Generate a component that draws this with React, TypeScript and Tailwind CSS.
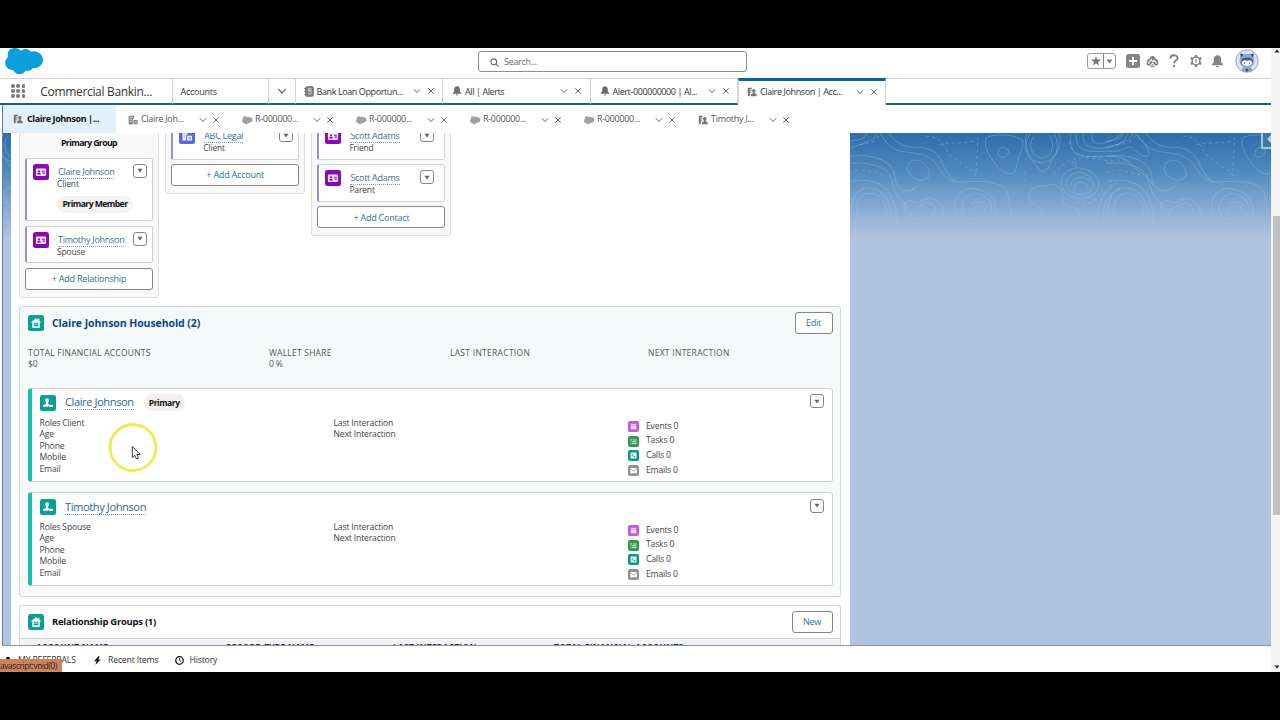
import type { ReactNode } from "react";
import clsx from "clsx";

type IconProps = { className?: string };

function Chevron({ className }: IconProps) {
  return (
    <svg viewBox="0 0 8 8" className={clsx("h-2 w-2 shrink-0", className)} fill="none" stroke="#666" strokeWidth="1">
      <path d="M1 2.300 4 5.600 7 2.300" />
    </svg>
  );
}

function Close({ className }: IconProps) {
  return (
    <svg viewBox="0 0 8 8" className={clsx("h-2 w-2 shrink-0", className)} fill="none" stroke="#666" strokeWidth="1">
      <path d="M1.300 1.300 6.700 6.700M6.700 1.300 1.300 6.700" />
    </svg>
  );
}

function Bell({ className }: IconProps) {
  return (
    <svg viewBox="0 0 12 12" className={className} fill="#706e6b">
      <path d="M6 .3C3.800.3 2.600 2 2.600 4v2.600L.8 8.500v.9h10.400v-.9L9.400 6.600V4C9.400 2 8.200.3 6 .3ZM4.300 10.200a1.750 1.500 0 0 0 3.400 0Z" />
    </svg>
  );
}

function LoanIcon() {
  return (
    <svg viewBox="0 0 10 11" className="ml-[-1px] h-[11px] w-2.5" fill="none" stroke="#666" strokeWidth="1">
      <rect x="1.800" y=".8" width="7.400" height="9.400" rx=".8" fill="#888" />
      <path d="M3.700 3h3.800M3.700 5h3.800M4.500 7.500l1 1 2-2" stroke="#eee" strokeWidth=".9" />
      <path d="M.4 2.500h2M.4 5.500h2M.4 8.500h2" />
    </svg>
  );
}

function PersonAccount() {
  return (
    <svg viewBox="0 0 10 10" className="h-2.5 w-2.5" fill="#777">
      <path d="M.8.8h4v1.400h-2v1h1.800v1H2.800v1h1.400v1H2.800V9h-2Z" />
      <circle cx="6.800" cy="3.700" r="1.800" />
      <path d="M5.900 5h1.800v1.300l2 1v1.900H3.900V7.300l2-1Z" />
    </svg>
  );
}

function Building() {
  return (
    <svg viewBox="0 0 10 10" className="h-2.5 w-2.5" fill="#888">
      <path d="M.6.8h5.400v3H4.800v5.400H.6Z" />
      <path d="M5.400 5h4.200v4.200H5.400Z" />
      <path d="M1.600 2.400h3M1.600 4.400h2.400M1.600 6.400h2.400M6.300 7h2.400" stroke="#eee" strokeWidth=".7" />
    </svg>
  );
}

const CLOUD =
  "M16 4.200C17.300 2.700 19.200 2 21.100 2.200c2.100.2 3.900 1.300 5 3 1.300-.6 2.800-.7 4.300-.4 4.600.9 7.900 4.900 7.600 9.700-.4 5-4.900 8.900-10.200 8.100-1.300 2.400-4.300 3.700-7.200 2.600-1.300 3-4.500 4.700-7.700 3.700-2.200-.6-3.900-2.200-4.600-4.300C4 25.200 0 21.500.2 16.700c.1-2.500 1.300-4.600 3-5.900C1.500 6.500 4.100 1.900 8.700 1.200c3-.4 5.700.8 7.300 3Z";

function Cloud() {
  return (
    <svg viewBox="0 0 40 30" className="h-2.5 w-[11px]" fill="#a0a0a0" preserveAspectRatio="none">
      <path d={CLOUD} transform="translate(0 3) scale(1 .85)" />
    </svg>
  );
}

function MenuButton({ className }: IconProps) {
  return (
    <span className={clsx("flex h-3.5 w-3.5 shrink-0 items-center justify-center rounded-[3px] border border-[#858585] bg-white", className)}>
      <svg viewBox="0 0 8 6" className="h-[5px] w-1.5" fill="#666">
        <path d="M.5.5h7L4 5.500Z" />
      </svg>
    </span>
  );
}

/* Square object icons */
function ContactIcon() {
  return (
    <svg viewBox="0 0 16 16" className="h-4 w-4 shrink-0">
      <rect width="16" height="16" rx="2.500" fill="#8a08b4" />
      <rect x="2.900" y="4.600" width="10.200" height="7.300" rx="1" fill="#f6e6fb" />
      <circle cx="6" cy="7.300" r="1.100" fill="#8a08b4" />
      <path d="M4 10.500c0-2.300 4-2.300 4 0ZM8.800 6.700h3v1h-3ZM9.600 8.400h2.200v1.300H9.600Z" fill="#8a08b4" />
    </svg>
  );
}

function AccountIcon() {
  return (
    <svg viewBox="0 0 16 16" className="h-4 w-4 shrink-0">
      <rect width="16" height="16" rx="2.500" fill="#5867e8" />
      <path d="M3.500 3.500h5v3.300H7v5.700H3.500ZM8 7.700h5v4.800H8Z" fill="#fff" />
      <path d="M4.500 5h3M4.500 7h1.500M4.500 9h1.500M9 9.300h3M9 11h3" stroke="#5867e8" strokeWidth=".7" />
    </svg>
  );
}

function HouseIcon() {
  return (
    <svg viewBox="0 0 16 16" className="h-4 w-4 shrink-0">
      <rect width="16" height="16" rx="2.500" fill="#0b9f90" />
      <path d="M8 3 2.800 7.600h1.400v4.600c0 .5.3.8.8.8h6c.5 0 .8-.3.8-.8V7.600h1.400l-1.800-1.700V3.700H9.900v1Z" fill="#eafaf7" />
      <circle cx="6.900" cy="8.300" r=".9" fill="#0b9f90" />
      <circle cx="9.300" cy="8.300" r=".9" fill="#0b9f90" />
      <path d="M5.400 9.600h5.400L9.900 11.200H6.300Z" fill="#0b9f90" />
    </svg>
  );
}

function MemberIcon() {
  return (
    <svg viewBox="0 0 16 16" className="h-4 w-4 shrink-0">
      <rect width="16" height="16" rx="2.500" fill="#0b9f90" />
      <ellipse cx="7" cy="5.500" rx="1.900" ry="2.300" fill="#fff" />
      <path d="M6.100 6.500h1.800v1.800l1 .6-.6 2.900H3.200V10.300L6.100 8.700Z" fill="#fff" />
      <rect x="8.900" y="9.700" width="4.300" height="2.300" rx="1.100" fill="#fff" />
    </svg>
  );
}

const activities: { label: string; color: string; glyph: ReactNode }[] = [
  {
    label: "Events 0",
    color: "#c05bdf",
    glyph: <path d="M2.800 3.200h5.400v1H2.800ZM2.800 4.700h5.400v3.500H2.800ZM3.700 2.400h.8v1h-.8ZM6.500 2.400h.8v1h-.8Z" fill="#f7e4fb" />,
  },
  {
    label: "Tasks 0",
    color: "#359a51",
    glyph: <path d="M2.300 3.700l.7.7 1-1.300M5 4h3.500M4 5.700h4.500M2.500 5.700h.8M4 7.500h4.500M2.500 7.500h.8" stroke="#fff" strokeWidth=".8" fill="none" />,
  },
  {
    label: "Calls 0",
    color: "#0b9a8b",
    glyph: (
      <>
        <rect x="2.700" y="2.500" width="5.800" height="6" rx=".7" fill="#eefafa" />
        <path d="M4.300 4c-.2 2 1.300 3.300 3 3l-.1-.9-.9-.1-.4.3-.9-1 .4-.4-.3-.9Z" fill="#0b9a8b" />
      </>
    ),
  },
  {
    label: "Emails 0",
    color: "#939393",
    glyph: (
      <>
        <rect x="2.300" y="3" width="6.600" height="5.200" rx=".6" fill="#fff" />
        <path d="M2.400 3.500 5.600 6.200 8.800 3.500" stroke="#939393" strokeWidth=".8" fill="none" />
      </>
    ),
  },
];

function TopBar() {
  return (
    <header className="flex h-[31px] items-center border-b border-[#d4d4d4] bg-white">
      <svg viewBox="0 0 40 30" className="mt-[-5px] ml-[5px] h-[28px] w-[40px]" preserveAspectRatio="none" fill="#0b9edb">
        <path d={CLOUD} />
      </svg>
      <div className="mt-[-4px] ml-[433px] flex h-[21px] w-[269px] items-center rounded-[3px] border border-[#8c8c8c] pl-[11px]">
        <svg viewBox="0 0 10 10" className="mt-0.5 h-[9px] w-[9px]" fill="none" stroke="#666" strokeWidth="1.200">
          <circle cx="4.200" cy="4.200" r="3.200" />
          <path d="M6.500 6.500 9.500 9.500" />
        </svg>
        <span className="mt-px ml-[5px] text-[9px] tracking-[-0.3px] text-[#706e6b]">Search...</span>
      </div>
      <div className="mt-[-4px] ml-[340px] flex items-center">
        <div className="flex h-4 w-[29px] rounded-[3px] border border-[#999]">
          <span className="flex w-4 items-center justify-center border-r border-[#888]">
            <svg viewBox="0 0 10 10" className="h-2.5 w-2.5" fill="#777">
              <path d="m5 0 1.200 3.600H10L7 5.900 8.100 9.600 5 7.400 1.900 9.600 3 5.900 0 3.600h3.800Z" />
            </svg>
          </span>
          <span className="flex flex-1 items-center justify-center">
            <svg viewBox="0 0 8 6" className="h-[5px] w-[7px]" fill="#777">
              <path d="M.5.5h7L4 5.500Z" />
            </svg>
          </span>
        </div>
        <svg viewBox="0 0 14 14" className="ml-2.5 h-3.5 w-3.5">
          <rect width="14" height="14" rx="2.500" fill="#858585" />
          <path d="M7 3v8M3 7h8" stroke="#fff" strokeWidth="1.800" />
        </svg>
        {/* Guidance center */}
        <svg viewBox="0 0 14 14" className="ml-[6px] h-[13px] w-[13px]" fill="#808080">
          <path d="M4 3.600C4.800 1.500 5.900 1 7 1s2.200.5 3 2.600c2 .9 3.400 3.100 3.400 5.300 0 1.300-.6 2-1.600 2.400H2.200C1.200 10.900.6 10.200.6 8.900.6 6.700 2 4.500 4 3.600ZM3.800 12h6.400L8.600 13.200H5.400Z" />
          <path d="M2.300 9.300 5.600 5l1.600 2 1.300-1.300 3.200 3.600M4.700 11.600 7 8.600l2.300 3" stroke="#fff" strokeWidth="1.100" fill="none" />
        </svg>
        <svg viewBox="0 0 14 14" className="ml-2 h-3.5 w-3.5" fill="none" stroke="#808080" strokeWidth="1.900">
          <path d="M3.400 4.500c0-4.300 7.200-4.200 7.200-.3C10.600 6.500 7 6.700 7 9.300" />
          <path d="M7 11v2.200" />
        </svg>
        <svg viewBox="0 0 14 14" className="ml-2 h-3.5 w-3.5" fill="none" stroke="#808080">
          <circle cx="7" cy="7" r="3.900" strokeWidth="1.500" />
          <path d="M7 1v2M7 11v2M1.800 4l1.700 1M10.500 9l1.700 1M1.800 10l1.700-1M10.500 5l1.700-1" strokeWidth="2.200" />
          <path d="m7.400 5-1.200 2h1.400L6.800 9" strokeWidth=".9" />
        </svg>
        <Bell className="ml-2 h-[13px] w-[13px] opacity-85" />
        <svg viewBox="0 0 24 24" className="ml-[10.500px] h-6 w-6">
          <circle cx="12" cy="12" r="11.200" fill="#dce4f3" stroke="#8d9abf" strokeWidth=".9" />
          <path d="M5 9c0-3 3-4 7-4s7 1 7 4c1.500 5-1 9.500-7 9.500S3.500 14 5 9Z" fill="#93a4cd" />
          <path d="M5.200 4.600 8.600 5.200 6 8.400ZM18.800 4.600l-3.400.6L18 8.400Z" fill="#34436f" />
          <path d="M6.300 13.500c-.3-3 1.300-5 3.200-4.500 1.700-.8 3.300-.8 5 0 1.900-.5 3.500 1.500 3.200 4.500-.3 2.500-2.400 3.700-5.700 3.700s-5.400-1.200-5.700-3.700Z" fill="#43558a" />
          <path d="M7 14c0-2.800 2.300-3.600 5-2.200 2.700-1.400 5-.6 5 2.200 0 2-2 3-5 3s-5-1-5-3Z" fill="#fff" />
          <circle cx="9.500" cy="14" r=".7" fill="#34436f" />
          <circle cx="14.500" cy="14" r=".7" fill="#34436f" />
          <path d="M8 18.300h8l1.500 3c-3 2-8 2-11 0Z" fill="#8fa1cb" />
          <circle cx="12" cy="21" r="1.500" fill="#3e4e7b" />
        </svg>
      </div>
    </header>
  );
}

function WorkspaceTab({ icon, label, width, active }: { icon: ReactNode; label: string; width: string; active?: boolean }) {
  return (
    <div
      className={clsx(
        "flex items-center",
        width,
        active
          ? "mt-[-1px] border-r border-l border-t-[3px] border-[#d4d4d4] border-t-[#0e5f93] bg-white pb-[3px] pl-2"
          : "border-r border-b-2 border-[#d4d4d4] border-b-[#17637c] pl-[9px]",
      )}
    >
      {icon}
      <span className="ml-[3px] w-0 flex-1 pt-px whitespace-nowrap text-[9px] tracking-[-0.4px] text-[#333]">{label}</span>
      <Chevron />
      <Close className="mr-[7.500px] ml-1.5" />
    </div>
  );
}

function NavBar() {
  return (
    <nav className="flex h-[26px] bg-white">
      <div className="flex w-[172.500px] items-center border-r border-b-2 border-[#d4d4d4] border-b-[#17637c] pl-[11px]">
        <div className="grid grid-cols-3 gap-[1.600px]">
          {Array.from({ length: 9 }, (_, i) => (
            <span key={i} className="h-[3.700px] w-[3.700px] rounded-full bg-[#777]" />
          ))}
        </div>
        <span className="ml-[15px] pt-px whitespace-nowrap text-[12px] tracking-[-0.320px] text-[#333]">Commercial Bankin...</span>
      </div>
      <div className="flex w-24 items-center border-r border-b-2 border-[#d4d4d4] border-b-[#17637c] pt-px pl-2 text-[9px] tracking-[-0.250px] text-[#333]">Accounts</div>
      <div className="flex w-[27px] items-center justify-center border-r border-b-2 border-[#d4d4d4] border-b-[#17637c]">
        <Chevron className="scale-125" />
      </div>
      <WorkspaceTab icon={<LoanIcon />} label="Bank Loan Opportun..." width="w-[147.500px]" />
      <WorkspaceTab icon={<Bell className="h-2.5 w-2.5" />} label="All | Alerts" width="w-[147.500px]" />
      <WorkspaceTab icon={<Bell className="h-2.5 w-2.5" />} label="Alert-000000000 | Al..." width="w-[147.500px]" />
      <WorkspaceTab icon={<PersonAccount />} label="Claire Johnson | Acc..." width="w-[148px]" active />
      <div className="flex-1 border-b-2 border-[#17637c]" />
    </nav>
  );
}

const subtabs = [
  { label: "Claire Joh...", icon: <Building /> },
  { label: "R-000000...", icon: <Cloud /> },
  { label: "R-000000...", icon: <Cloud /> },
  { label: "R-000000...", icon: <Cloud /> },
  { label: "R-000000...", icon: <Cloud /> },
  { label: "Timothy J...", icon: <PersonAccount /> },
];

function SubTabs() {
  return (
    <div className="flex h-7 items-center bg-white pl-0.5">
      <div className="flex h-full w-[114px] items-center border-l border-[#5f7f96] bg-[#e3f0f9] pl-2.5">
        <PersonAccount />
        <span className="ml-[4px] whitespace-nowrap text-[9px] font-bold tracking-[-0.4px] text-[#111]">Claire Johnson |...</span>
      </div>
      {subtabs.map(({ label, icon }, i) => (
        <div key={i} className="flex w-[114px] items-center pl-3">
          <span className="flex w-[13px] pt-px">{icon}</span>
          <span className="flex-1 whitespace-nowrap text-[9px] tracking-[-0.3px] text-[#555]">{label}</span>
          <Chevron className="mt-px mr-[-0.500px]" />
          <Close className="mt-px mr-[10px] ml-1.5" />
        </div>
      ))}
    </div>
  );
}

/* One repeat of the contour-line artwork behind the record page */
function Contours() {
  return (
    <g fill="none" strokeWidth="2.500">
      <path d="M450 315c10-14 32-4 27 10-5 18-36 16-30-3ZM412 278c-12 25 5 50 28 82 20 26 52 38 60 14 4-32 25-66 20-86-20-20-80-22-108-10Z" />
      <path d="M555 275c-18 18-12 60 20 64 38 5 44-48 24-68M542 268c-22 30-10 82 35 86 48-2 58-54 38-86M532 268c-16 60 20 76 36 106 10 12 28 5 32-10 8-28 44-50 30-96" />
      <path d="M730 268c-8 26 14 34 42 24 20-4 36-16 48-26M702 268c-4 40 34 48 72 40 34-8 50-10 62-40M682 268c-8 66 60 50 108 52 32 2 42-22 60-10 22 20 38 32 48 20 8-18-22-46-40-62M664 268c-8 84 52 66 106 66 48 0 68 10 88 36 20 20 40 22 54 52" />
      <path d="M178 358c12-18 40-12 50 2 18 20 16 40-4 46-26 6-62-26-46-48Z" />
      <path d="M94 268c36 64 76 50 116 60 58 12 56 52 84 70 20 20 40 12 92 12 72 0 92 24 94 60 2 42 22 54 4 84M120 268c40 50 70 36 108 42 60 16 40 60 90 100" />
      <path d="M0 335c50-6 90 0 120 26 24 24 12 36 22 56 14 28 40 28 64 6M0 355c60-4 110 10 124 42 10 34 8 50 44 80M0 310c60-20 72-22 80-42M0 290c30-4 44-8 52-22" />
      <path d="M0 412c50-14 100-2 124 40 14 34 24 56 12 92M8 520c-6-44 4-92 54-90 40 0 62 40 68 108M24 510c-8-40 14-68 44-64 38 4 48 50 42 64-14 10-24 8-24 32M40 555c-10-22 2-32 14-32" />
      <path d="M166 495c-8-24 10-32 26-24 22 14 36-22 66-6 24 12 42 60 8 66-22 10-36-4-54 8-22 8-38-18-46-44ZM190 496c14-6 24-14 36-20 20-4 40 8 32 28-14 20-38 8-52 20-10 8-28-14-16-28Z" />
      <path d="M338 490c2-30 30-54 60-40 36 18 38 56 10 72-36 14-70-4-70-32ZM320 510c-16-50 18-88 66-76 62 14 70 80 30 104-40 16-84 6-96-28ZM356 495c10-28 44-30 62-8M362 500c12-20 34-22 50-4M362 515c4-8 14-4 10 6-4 8-14 4-10-6ZM403 498c6-8 16-2 10 8-6 6-14 0-10-8ZM334 500l10-4 2 16" />
      <path d="M638 424c-10-26 20-58 54-54 50 8 70 44 48 74-28 30-92 20-102-20ZM650 420c0-28 28-42 50-36 34 10 40 40 22 58-26 16-62 6-72-22ZM666 424c0-30 42-36 60-10M674 430c6-24 32-24 44-4M666 355c8-8 20 0 14 14" />
      <path d="M540 470c-8-36 22-50 52-46 26-16 52 12 50 38-10 26 28 18 40 32 18 20 6 40-4 56M540 470c30 10 48 32 50 80M742 545c-2-44 14-110 60-130M758 555c0-60 10-100 54-126M470 550l14-40M620 555l10-40h60M142 550v-40M170 545h150" />
      <path strokeDasharray="10 9" d="M0 385c40-20 80 0 112 10M230 274c60 0 50 50 90 70 30 30 52 26 60 48l6-114M528 380v34M612 390c34-40 60-60 140-46 30 10 60-10 92 16M680 470c30 14 60 10 80-40M660 290c6 30 20 50 100 46M270 300c30-10 60 0 110-12M30 300c30 0 50-10 60-30" />
    </g>
  );
}

function Backdrop() {
  return (
    <svg aria-hidden className="absolute inset-x-0 top-0 h-[106px] w-full" viewBox="0 0 1269 106">
      <defs>
        <linearGradient id="sky" x2="0" y2="1">
          <stop offset="0" stopColor="#2f6ca9" />
          <stop offset=".35" stopColor="#4f88bd" />
          <stop offset=".7" stopColor="#86abd2" />
          <stop offset="1" stopColor="#b0c4df" />
        </linearGradient>
        <linearGradient id="ink" gradientUnits="userSpaceOnUse" x1="0" y1="265" x2="0" y2="565">
          <stop offset="0" stopColor="#a6cbec" stopOpacity=".42" />
          <stop offset=".7" stopColor="#b6d2ee" stopOpacity=".32" />
          <stop offset="1" stopColor="#c6d9ee" stopOpacity="0" />
        </linearGradient>
      </defs>
      <rect width="1269" height="106" fill="url(#sky)" />
      {[-180, 847, 1104].map((x) => (
        <g key={x} transform={`translate(${x} -88.300) scale(.3333)`} stroke="url(#ink)">
          <Contours />
        </g>
      ))}
    </svg>
  );
}

type RelationItemProps = { icon: ReactNode; name: string; role: string; menuClass?: string; children?: ReactNode };

function RelationItem({ icon, name, role, menuClass, children }: RelationItemProps) {
  return (
    <div className="rounded-[2px] border border-l-2 border-[#d2d2d2] border-l-[#9c8ed0] bg-white pt-[5px] pr-[5px] pb-[4.500px] pl-1.5">
      <div className="flex items-start">
        {icon}
        <div className="ml-2 w-0 flex-1">
          <p className="ml-px h-3.5 whitespace-nowrap text-[9px] leading-[15px] tracking-[-0.280px] text-[#3a6f9b]">
            <span className="border-b border-dotted border-[#7a9dbb]">{name}</span>
          </p>
          <p className="text-[8.500px] leading-[12px] tracking-[-0.150px] text-[#444]">{role}</p>
        </div>
        <MenuButton className={menuClass} />
      </div>
      {children}
    </div>
  );
}

function GroupColumn({ action, className, children }: { action: string; className?: string; children: ReactNode }) {
  return (
    <div className={clsx("flex w-[140px] flex-col gap-[4.700px] rounded-[3px] border border-[#dedede] bg-[#f8f8f8] px-[5px] pb-[7px]", className)}>
      {children}
      <button className="h-[22px] w-full shrink-0 rounded-[3px] border border-[#858585] bg-white text-[9px] tracking-[-0.220px] text-[#2a739e]">
        {action}
      </button>
    </div>
  );
}

function Groups() {
  return (
    <div className="flex items-start gap-[6.200px]">
      <GroupColumn action="+ Add Relationship" className="mt-[-10px] h-[175px]">
        <p className="mb-[3px] pt-[13px] text-center text-[8.700px] leading-[13px] font-bold tracking-[-0.6px] text-[#111]">Primary Group</p>
        <RelationItem icon={<ContactIcon />} name="Claire Johnson" role="Client">
          <div className="mt-[6px] mb-[3px] ml-[24px] flex h-[17px] w-[76px] items-center justify-center rounded-full bg-[#f3f3f3] text-[8.700px] font-bold tracking-[-0.6px] whitespace-nowrap text-[#111]">
            Primary Member
          </div>
        </RelationItem>
        <RelationItem icon={<ContactIcon />} name="Timothy Johnson" role="Spouse" />
      </GroupColumn>
      <GroupColumn action="+ Add Account" className="mt-[-12px]">
        <RelationItem icon={<AccountIcon />} name="ABC Legal" role="Client" />
      </GroupColumn>
      <GroupColumn action="+ Add Contact" className="mt-[-12px]">
        <RelationItem icon={<ContactIcon />} name="Scott Adams" role="Friend" menuClass="mr-[5px]" />
        <RelationItem icon={<ContactIcon />} name="Scott Adams" role="Parent" menuClass="mr-[5px]" />
      </GroupColumn>
    </div>
  );
}

function Member({ name, role, primary, className }: { name: string; role: string; primary?: boolean; className?: string }) {
  return (
    <div className={clsx("rounded-[3px] border border-l-4 border-[#d0d0d0] border-l-[#18bfa9] bg-white pl-[7.500px]", className)}>
      <div className="flex items-center pr-2">
        <MemberIcon />
        <span className="ml-[9.500px] border-b border-dotted border-[#6f9abd] text-[11.200px] leading-[14px] tracking-[-0.450px] text-[#2f6796]">{name}</span>
        {primary && (
          <span className="ml-[10px] flex h-[17px] items-center rounded-full bg-[#f3f1f0] px-[5px] pt-px text-[8.500px] font-bold tracking-[-0.450px] text-[#111]">
            Primary
          </span>
        )}
        <MenuButton className="mt-[-3px] ml-auto" />
      </div>
      <div className="grid grid-cols-[294px_294px_1fr] pt-[7px] text-[8.600px] leading-[11.400px] tracking-[-0.160px] text-[#444]">
        <div>
          {[`Roles ${role}`, "Age", "Phone", "Mobile", "Email"].map((line) => (
            <p key={line}>{line}</p>
          ))}
        </div>
        <div>
          <p>Last Interaction</p>
          <p>Next Interaction</p>
        </div>
        <div className="mt-px">
          {activities.map(({ label, color, glyph }) => (
            <div key={label} className="flex h-[14.800px] items-center gap-[7.500px]">
              <svg viewBox="0 0 11 11" className="h-[11px] w-[11px]">
                <rect width="11" height="11" rx="2" fill={color} />
                {glyph}
              </svg>
              {label}
            </div>
          ))}
        </div>
      </div>
    </div>
  );
}

function Household() {
  return (
    <section className="h-[291px] rounded-[3px] border border-[#d4d6d6] bg-[#f5f9fa] pt-[5px] pr-[7.500px] pl-2">
      <div className="flex items-center">
        <HouseIcon />
        <h2 className="mt-px ml-2 text-[10.500px] font-bold tracking-[-0.070px] text-[#0b4682]">Claire Johnson Household (2)</h2>
        <button className="ml-auto h-[22px] w-[38px] rounded-[3px] border border-[#858585] bg-white text-[9px] tracking-[-0.2px] text-[#2a739e]">Edit</button>
      </div>
      <div className="grid h-[54px] grid-cols-[241px_181px_198px_1fr] pt-[12.500px] text-[8.500px] leading-[11.300px] text-[#555]">
        <div>
          <p className="tracking-[0.220px]">TOTAL FINANCIAL ACCOUNTS</p>
          <p className="tracking-[-0.1px]">$0</p>
        </div>
        <div>
          <p className="tracking-[0.220px]">WALLET SHARE</p>
          <p className="tracking-[-0.1px]">0 %</p>
        </div>
        <p className="tracking-[0.280px]">LAST INTERACTION</p>
        <p className="tracking-[0.280px]">NEXT INTERACTION</p>
      </div>
      <Member name="Claire Johnson" role="Client" primary className="h-[94px] pt-[5px]" />
      <Member name="Timothy Johnson" role="Spouse" className="mt-[10px] h-[94px] pt-[6px]" />
    </section>
  );
}

function RelationshipGroups() {
  return (
    <section className="mt-2 rounded-t-[3px] border border-b-0 border-[#d4d6d6] bg-white">
      <div className="flex h-[33px] items-center border-b border-[#d4d4d4] pr-[7.500px] pl-2">
        <HouseIcon />
        <h2 className="ml-2 text-[9.500px] font-bold tracking-[-0.280px] text-[#111]">Relationship Groups (1)</h2>
        <button className="ml-auto h-[22px] w-[41px] rounded-[3px] border border-[#858585] bg-white text-[9px] tracking-[-0.2px] text-[#2a739e]">New</button>
      </div>
      <div className="grid grid-cols-[190px_167px_161px_1fr] bg-[#f3f3f3] pt-[2px] pl-4 text-[8.500px] leading-[12px] font-bold tracking-[0.220px] text-[#333]">
        <span>ACCOUNT NAME</span>
        <span>RECORD TYPE NAME</span>
        <span>LAST INTERACTION</span>
        <span>TOTAL FINANCIAL ACCOUNTS</span>
      </div>
    </section>
  );
}

function UtilityBar() {
  return (
    <footer className="relative flex h-[26px] items-center bg-white pt-[3.500px] text-[8.700px] tracking-[-0.180px] text-[#333]">
      <svg viewBox="0 0 10 10" className="ml-[3px] h-2.5 w-2.5" fill="#111">
        <circle cx="5" cy="3" r="2.200" />
        <path d="M1 9c0-4.500 8-4.500 8 0Z" />
      </svg>
      <span className="ml-[5px] w-[75px]">MY REFERRALS</span>
      <svg viewBox="0 0 8 10" className="h-[9px] w-[9px]" fill="#111">
        <path d="M4.800.3.300 5.700h2.600L1.800 9.700l5.900-5.700H4.800L6.500.3Z" />
      </svg>
      <span className="ml-1.5 w-[66.500px]">Recent Items</span>
      <svg viewBox="0 0 10 10" className="h-[9px] w-[9px]" fill="none" stroke="#111" strokeWidth="1.400">
        <circle cx="5" cy="5" r="4.200" />
        <path d="M5 2.500V5l1.700 1.200" strokeWidth="1" />
      </svg>
      <span className="ml-1.5">History</span>
      {/* Browser status bubble */}
      <span className="absolute bottom-0 left-0 flex h-[13px] w-[62px] items-center overflow-hidden bg-[#ca8560] pt-px text-[8.500px] tracking-[-0.450px] whitespace-nowrap text-[#33231b]">
        avascript:void(0)
      </span>
    </footer>
  );
}

export default function App() {
  return (
    <div className="relative h-[720px] w-[1280px] overflow-hidden bg-black py-12 font-['Open_Sans','Noto_Sans',sans-serif]">
      <div className="flex h-[624px] bg-white">
        <div className="flex w-[1271px] flex-col">
          <TopBar />
          <NavBar />
          <SubTabs />
          <main className="relative ml-0.5 h-[513px] overflow-hidden border-b border-l border-[#8595b5] border-l-[#5f7faa] bg-[#b0c4df]">
            <Backdrop />
            <div className="relative ml-2 h-full w-[839px] bg-white pr-[9px] pl-2">
              <div className="h-[173px]">
                <Groups />
              </div>
              <Household />
              <RelationshipGroups />
            </div>
            {/* Collapsed side panel handle */}
            <div className="absolute top-[-4px] right-0 flex h-5 w-[10px] items-center justify-end border-2 border-r-0 border-[#9cc7dc] bg-[#3c7a9c]">
              <svg viewBox="0 0 4 8" className="h-2 w-1" fill="#a9d4e4">
                <path d="M4 0v8L0 4Z" />
              </svg>
            </div>
          </main>
          <UtilityBar />
        </div>
        <div className="flex w-[9px] flex-col items-end bg-[#f3f3f3]">
          <svg viewBox="0 0 6 4" className="mt-px h-1 w-1.5" fill="#222">
            <path d="M3 .5 5.500 3.500h-5Z" />
          </svg>
          <div className="mt-[163px] h-[299px] w-[7px] bg-[#c1c1c1]" />
          <svg viewBox="0 0 6 4" className="mt-auto mb-[3px] h-1 w-1.5" fill="#222">
            <path d="M.5.5h5L3 3.500Z" />
          </svg>
        </div>
      </div>
      {/* Pointer with click highlight */}
      <svg className="absolute top-[423px] left-[108px] h-[50px] w-[50px]" viewBox="0 0 50 50" fill="none">
        <circle cx="25" cy="24.500" r="23" stroke="#eded52" strokeWidth="2.800" />
        <path d="M24.300 23.500v11l2.500-2.200 1.800 3.700 2-1-1.800-3.500h3.400Z" fill="#fff" stroke="#222" strokeWidth=".9" />
      </svg>
    </div>
  );
}
